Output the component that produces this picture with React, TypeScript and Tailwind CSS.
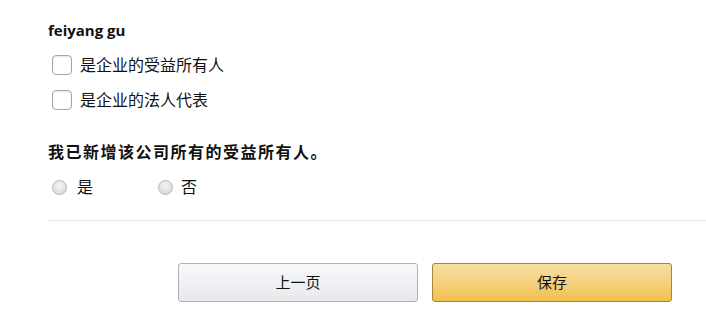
import React from "react";

export default function App() {
  const cjk = { fontFamily: '"Open Sans", "Noto Sans CJK SC", sans-serif' };
  return (
    <div className="w-[706px] h-[329px] bg-white text-[#111]" style={cjk}>
      <div className="pl-[48px] pt-[18px]">
        <div className="text-[15px] font-bold leading-[24px] text-[#111]">feiyang gu</div>
        <div className="mt-[13px] flex flex-col gap-[15px] pl-[4px]">
          <label className="flex items-center gap-[8px] h-[20px]">
            <span className="w-[20px] h-[20px] rounded-[4px] border border-[#a6a6a6] bg-white shadow-[inset_0_1px_2px_rgba(0,0,0,0.1)]" />
            <span className="text-[16px] leading-[20px]">是企业的受益所有人</span>
          </label>
          <label className="flex items-center gap-[8px] h-[20px]">
            <span className="w-[20px] h-[20px] rounded-[4px] border border-[#a6a6a6] bg-white shadow-[inset_0_1px_2px_rgba(0,0,0,0.1)]" />
            <span className="text-[16px] leading-[20px]">是企业的法人代表</span>
          </label>
        </div>
        <div className="mt-[32px] text-[16px] font-bold leading-[20px] tracking-[1.5px]">我已新增该公司所有的受益所有人。</div>
        <div className="mt-[17px] flex items-center pl-[4px] h-[16px]">
          <span className="flex items-center gap-[10px] w-[106px]">
            <span className="w-[15px] h-[15px] rounded-full border border-[#b5b5b5] bg-[radial-gradient(circle_at_50%_35%,#f4f4f4,#d4d4d4)]" />
            <span className="text-[16px] leading-[16px]">是</span>
          </span>
          <span className="flex items-center gap-[8px]">
            <span className="w-[15px] h-[15px] rounded-full border border-[#b5b5b5] bg-[radial-gradient(circle_at_50%_35%,#f4f4f4,#d4d4d4)]" />
            <span className="text-[16px] leading-[16px]">否</span>
          </span>
        </div>
        <div className="mt-[25px] h-px bg-[#e7e7e7]" />
        <div className="mt-[42px] flex gap-[14px] pl-[130px]">
          <button className="w-[240px] h-[39px] rounded-[3px] border border-[#adb1b8] bg-gradient-to-b from-[#f7f8fa] to-[#e7e9ec] text-[15px] text-[#111]">上一页</button>
          <button className="w-[240px] h-[39px] rounded-[3px] border border-[#a88734] bg-gradient-to-b from-[#f7dfa5] to-[#f0c14b] text-[15px] text-[#111]">保存</button>
        </div>
      </div>
    </div>
  );
}
